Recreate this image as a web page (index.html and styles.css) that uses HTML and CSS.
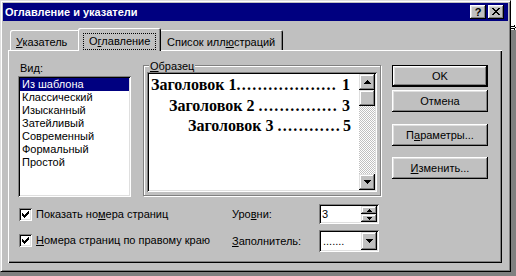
FILE: index.html
```html
<!DOCTYPE html>
<html>
<head>
<meta charset="utf-8">
<link rel="stylesheet" href="styles.css">
</head>
<body>
<div class="screen">
  <div class="dialog">
    <div class="titlebar">
      <span class="title">Оглавление и указатели</span>
      <div class="caption-btns">
        <div class="cap-btn help">?</div>
        <div class="cap-btn close">
          <svg width="8" height="7" viewBox="0 0 8 7" shape-rendering="crispEdges"><path d="M0 0h2v1H0zM6 0h2v1H6zM1 1h2v1H1zM5 1h2v1H5zM2 2h4v1H2zM3 3h2v1H3zM2 4h4v1H2zM1 5h2v1H1zM5 5h2v1H5zM0 6h2v1H0zM6 6h2v1H6z" fill="#000"/></svg>
        </div>
      </div>
    </div>
    <div class="dlg-body">
      <div class="tabs">
        <div class="tab t1"><u>У</u>казатель</div>
        <div class="tab active"><span class="focus">О<u>г</u>лавление</span></div>
        <div class="tab t3">Список илл<u>ю</u>страций</div>
      </div>
      <div class="panel">
        <div class="top">
          <div class="col-list">
            <div class="label">Ви<u>д</u>:</div>
            <div class="listbox">
              <div class="item sel">Из шаблона</div>
              <div class="item">Классический</div>
              <div class="item">Изысканный</div>
              <div class="item">Затейливый</div>
              <div class="item">Современный</div>
              <div class="item">Формальный</div>
              <div class="item">Простой</div>
            </div>
          </div>
          <div class="group">
            <div class="legend"><u>О</u>бразец</div>
            <div class="preview">
              <div class="toc">
                <div class="toc-line l1"><span>Заголовок 1</span><span class="dots">...................</span><span class="num">1</span></div>
                <div class="toc-line l2"><span>Заголовок 2&nbsp;</span><span class="dots">...............</span><span class="num">3</span></div>
                <div class="toc-line l3"><span>Заголовок 3&nbsp;</span><span class="dots">............</span><span class="num">5</span></div>
              </div>
              <div class="vscroll">
                <div class="sbtn"><svg width="7" height="4" viewBox="0 0 7 4" shape-rendering="crispEdges"><path d="M3 0h1v1H3zM2 1h3v1H2zM1 2h5v1H1zM0 3h7v1H0z" fill="#000"/></svg></div>
                <div class="sbtn thumb"></div>
                <div class="track"></div>
                <div class="sbtn"><svg width="7" height="4" viewBox="0 0 7 4" shape-rendering="crispEdges"><path d="M0 0h7v1H0zM1 1h5v1H1zM2 2h3v1H2zM3 3h1v1H3z" fill="#000"/></svg></div>
              </div>
            </div>
          </div>
          <div class="buttons">
            <div class="btn default">OK</div>
            <div class="btn b-cancel">Отмена</div>
            <div class="btn b-params">П<u>а</u>раметры...</div>
            <div class="btn b-edit"><u>И</u>зменить...</div>
          </div>
        </div>
        <div class="opt-row r1">
          <div class="chk-cell">
            <div class="chk"><svg width="7" height="7" viewBox="0 0 7 7" shape-rendering="crispEdges"><path d="M6 0h1v3H6zM5 1h1v3H5zM4 2h1v3H4zM0 2h1v3H0zM1 3h1v3H1zM3 3h1v3H3zM2 4h1v3H2z" fill="#000"/></svg></div>
            <span class="chk-label">Показать но<u>м</u>ера страниц</span>
          </div>
          <div class="lbl-cell">Уро<u>в</u>ни:</div>
          <div class="spin">
            <div class="spin-val">3</div>
            <div class="spin-btns">
              <div class="spbtn"><svg width="5" height="3" viewBox="0 0 5 3" shape-rendering="crispEdges"><path d="M2 0h1v1H2zM1 1h3v1H1zM0 2h5v1H0z" fill="#000"/></svg></div>
              <div class="spbtn"><svg width="5" height="3" viewBox="0 0 5 3" shape-rendering="crispEdges"><path d="M0 0h5v1H0zM1 1h3v1H1zM2 2h1v1H2z" fill="#000"/></svg></div>
            </div>
          </div>
        </div>
        <div class="opt-row r2">
          <div class="chk-cell">
            <div class="chk"><svg width="7" height="7" viewBox="0 0 7 7" shape-rendering="crispEdges"><path d="M6 0h1v3H6zM5 1h1v3H5zM4 2h1v3H4zM0 2h1v3H0zM1 3h1v3H1zM3 3h1v3H3zM2 4h1v3H2z" fill="#000"/></svg></div>
            <span class="chk-label"><u>Н</u>омера страниц по правому краю</span>
          </div>
          <div class="lbl-cell"><u>З</u>аполнитель:</div>
          <div class="combo">
            <div class="combo-val">.......</div>
            <div class="combo-btn"><svg width="7" height="4" viewBox="0 0 7 4" shape-rendering="crispEdges"><path d="M0 0h7v1H0zM1 1h5v1H1zM2 2h3v1H2zM3 3h1v1H3z" fill="#000"/></svg></div>
          </div>
        </div>
      </div>
    </div>
  </div>
  <div class="side">
    <div class="side-white">
      <svg class="side-arrow" width="5" height="5" viewBox="0 0 5 5" shape-rendering="crispEdges"><path d="M0 1h4v1H0zM0 3h4v1H0zM3 0h1v1H3zM4 2h1v1H4zM3 4h1v1H3z" fill="#000"/></svg>
    </div>
  </div>
</div>
</body>
</html>
```

FILE: styles.css
```css
* { box-sizing: border-box; }
html, body { margin: 0; padding: 0; }
body {
  width: 516px;
  height: 276px;
  overflow: hidden;
  background: #808080;
  font-family: "Liberation Sans", Arial, sans-serif;
  font-size: 11px;
  color: #000;
}
u { text-decoration: underline; text-underline-offset: 1px; }

.screen { display: flex; align-items: flex-start; }

.dialog {
  width: 511px;
  height: 272px;
  background: #c0c0c0;
  border-top: 1px solid #dfdfdf;
  border-left: 1px solid #dfdfdf;
  border-right: 1px solid #000;
  border-bottom: 1px solid #000;
  box-shadow: inset 1px 1px #fff, inset -1px -1px #808080;
  padding: 2px;
}

.titlebar {
  height: 18px;
  background: #000080;
  display: flex;
  align-items: center;
  padding-left: 2px;
}
.title {
  color: #fff;
  font-weight: bold;
  font-size: 11px;
  line-height: 18px;
  white-space: nowrap;
}
.caption-btns {
  margin-left: auto;
  margin-right: 4px;
  display: flex;
  gap: 2px;
}
.cap-btn {
  width: 16px;
  height: 14px;
  background: #c0c0c0;
  box-shadow: inset -1px -1px #000, inset 1px 1px #fff, inset -2px -2px #808080, inset 2px 2px #dfdfdf;
  display: flex;
  align-items: center;
  justify-content: center;
}
.cap-btn.help {
  font-weight: bold;
  font-size: 11px;
  line-height: 14px;
  padding-bottom: 1px;
}
.cap-btn.close svg { margin-top: -1px; }

.dlg-body { padding: 7px 6px 0 5px; }

.tabs {
  display: flex;
  align-items: flex-end;
  height: 22px;
  padding-left: 2px;
}
.tab {
  height: 20px;
  background: #c0c0c0;
  border-radius: 2px 2px 0 0;
  box-shadow: inset 1px 1px #fff, inset -1px 0 #000, inset -2px 0 #808080;
  padding: 6px 0 0 6px;
  line-height: 13px;
  white-space: nowrap;
}
.tab.t1 { width: 70px; }
.tab.t3 { width: 124px; padding-left: 8px; }
.tab.active {
  position: relative;
  z-index: 2;
  width: 83px;
  height: 23px;
  margin: 0 -2px -1px -2px;
  padding: 5px 0 0 5px;
}
.focus {
  display: block;
  width: 73px;
  height: 17px;
  border: 1px dotted #000;
  padding: 1px 0 0 5px;
  line-height: 13px;
}

.panel {
  width: 494px;
  height: 213px;
  background: #c0c0c0;
  box-shadow: inset 1px 1px #fff, inset -1px -1px #000, inset -2px -2px #808080;
  padding: 1px;
}

.top {
  display: flex;
  align-items: flex-start;
  height: 146px;
  padding-left: 9px;
}
.col-list { width: 113px; margin-top: 11px; }
.label { height: 13px; line-height: 13px; padding-left: 2px; }
.listbox {
  margin-top: 1px;
  height: 121px;
  background: #fff;
  padding: 2px;
  box-shadow: inset 1px 1px #808080, inset -1px -1px #fff, inset 2px 2px #000, inset -2px -2px #dfdfdf;
}
.item { height: 13px; line-height: 13px; padding-left: 2px; white-space: nowrap; }
.item.sel { background: #000080; color: #fff; }

.group {
  margin-left: 12px;
  margin-top: 14px;
  width: 238px;
  height: 131px;
  border: 1px solid #808080;
  box-shadow: inset 1px 1px #fff, 1px 1px #fff;
  display: flex;
  flex-direction: column;
  padding-left: 3px;
}
.legend {
  align-self: flex-start;
  margin-top: -6px;
  margin-left: 2px;
  height: 12px;
  line-height: 13px;
  padding: 0 1px;
  background: #c0c0c0;
}
.preview {
  width: 230px;
  height: 120px;
  background: #fff;
  padding: 2px;
  display: flex;
  box-shadow: inset 1px 1px #808080, inset -1px -1px #fff, inset 2px 2px #000, inset -2px -2px #dfdfdf;
}
.toc {
  flex: 1;
  min-width: 0;
  padding: 1px 9px 0 2px;
  font-family: "Liberation Serif", "Times New Roman", serif;
  font-weight: bold;
  font-size: 16px;
  line-height: 20.5px;
}
.toc-line { display: flex; white-space: nowrap; }
.toc-line.l2 { padding-left: 18px; }
.toc-line.l3 { padding-left: 37px; }
.dots { letter-spacing: 1.3px; }
.num { margin-left: auto; padding-left: 2px; }

.vscroll {
  width: 16px;
  display: flex;
  flex-direction: column;
}
.sbtn {
  width: 16px;
  height: 16px;
  background: #c0c0c0;
  box-shadow: inset -1px -1px #000, inset 1px 1px #dfdfdf, inset -2px -2px #808080, inset 2px 2px #fff;
  display: flex;
  align-items: center;
  justify-content: center;
}
.sbtn svg { margin-top: -1px; }
.track {
  flex: 1;
  background: repeating-conic-gradient(#c0c0c0 0 25%, #fff 0 50%) 0 0 / 2px 2px;
}

.buttons { margin-left: 11px; margin-top: 14px; width: 96px; }
.btn {
  height: 22px;
  background: #c0c0c0;
  box-shadow: inset -1px -1px #000, inset 1px 1px #fff, inset -2px -2px #808080, inset 2px 2px #dfdfdf;
  display: flex;
  align-items: center;
  justify-content: center;
  line-height: 13px;
  white-space: nowrap;
}
.btn.default { border: 1px solid #000; }
.b-cancel { margin-top: 3px; }
.b-params { margin-top: 12px; }
.b-edit { margin-top: 11px; }

.opt-row {
  display: flex;
  align-items: center;
  padding-left: 10px;
}
.opt-row.r1 { margin-top: 7px; height: 20px; }
.opt-row.r2 { margin-top: 6px; height: 22px; }
.chk-cell {
  width: 213px;
  display: flex;
  align-items: center;
  line-height: 13px;
  white-space: nowrap;
}
.r2 .chk-cell { margin-top: -2px; }
.chk {
  width: 13px;
  height: 13px;
  background: #fff;
  box-shadow: inset 1px 1px #808080, inset -1px -1px #fff, inset 2px 2px #000, inset -2px -2px #dfdfdf;
  padding: 3px;
  display: flex;
}
.chk-label { margin-left: 4px; }
.lbl-cell { width: 87px; line-height: 13px; white-space: nowrap; }

.spin, .combo {
  width: 60px;
  background: #fff;
  padding: 2px;
  display: flex;
  box-shadow: inset 1px 1px #808080, inset -1px -1px #fff, inset 2px 2px #000, inset -2px -2px #dfdfdf;
}
.spin { height: 20px; }
.combo { height: 22px; }
.spin-val { flex: 1; padding-left: 1px; line-height: 16px; }
.spin-btns { width: 16px; display: flex; flex-direction: column; }
.spbtn {
  height: 8px;
  background: #c0c0c0;
  box-shadow: inset -1px -1px #000, inset 1px 1px #dfdfdf, inset -2px -2px #808080, inset 2px 2px #fff;
  display: flex;
  align-items: center;
  justify-content: center;
}
.combo-val { flex: 1; padding-left: 2px; line-height: 18px; }
.combo-btn {
  width: 16px;
  background: #c0c0c0;
  box-shadow: inset -1px -1px #000, inset 1px 1px #dfdfdf, inset -2px -2px #808080, inset 2px 2px #fff;
  display: flex;
  align-items: center;
  justify-content: center;
}

.side { width: 5px; }
.side-white {
  height: 30px;
  background: #fff;
  padding-top: 25px;
}
.side-arrow { display: block; }
```
